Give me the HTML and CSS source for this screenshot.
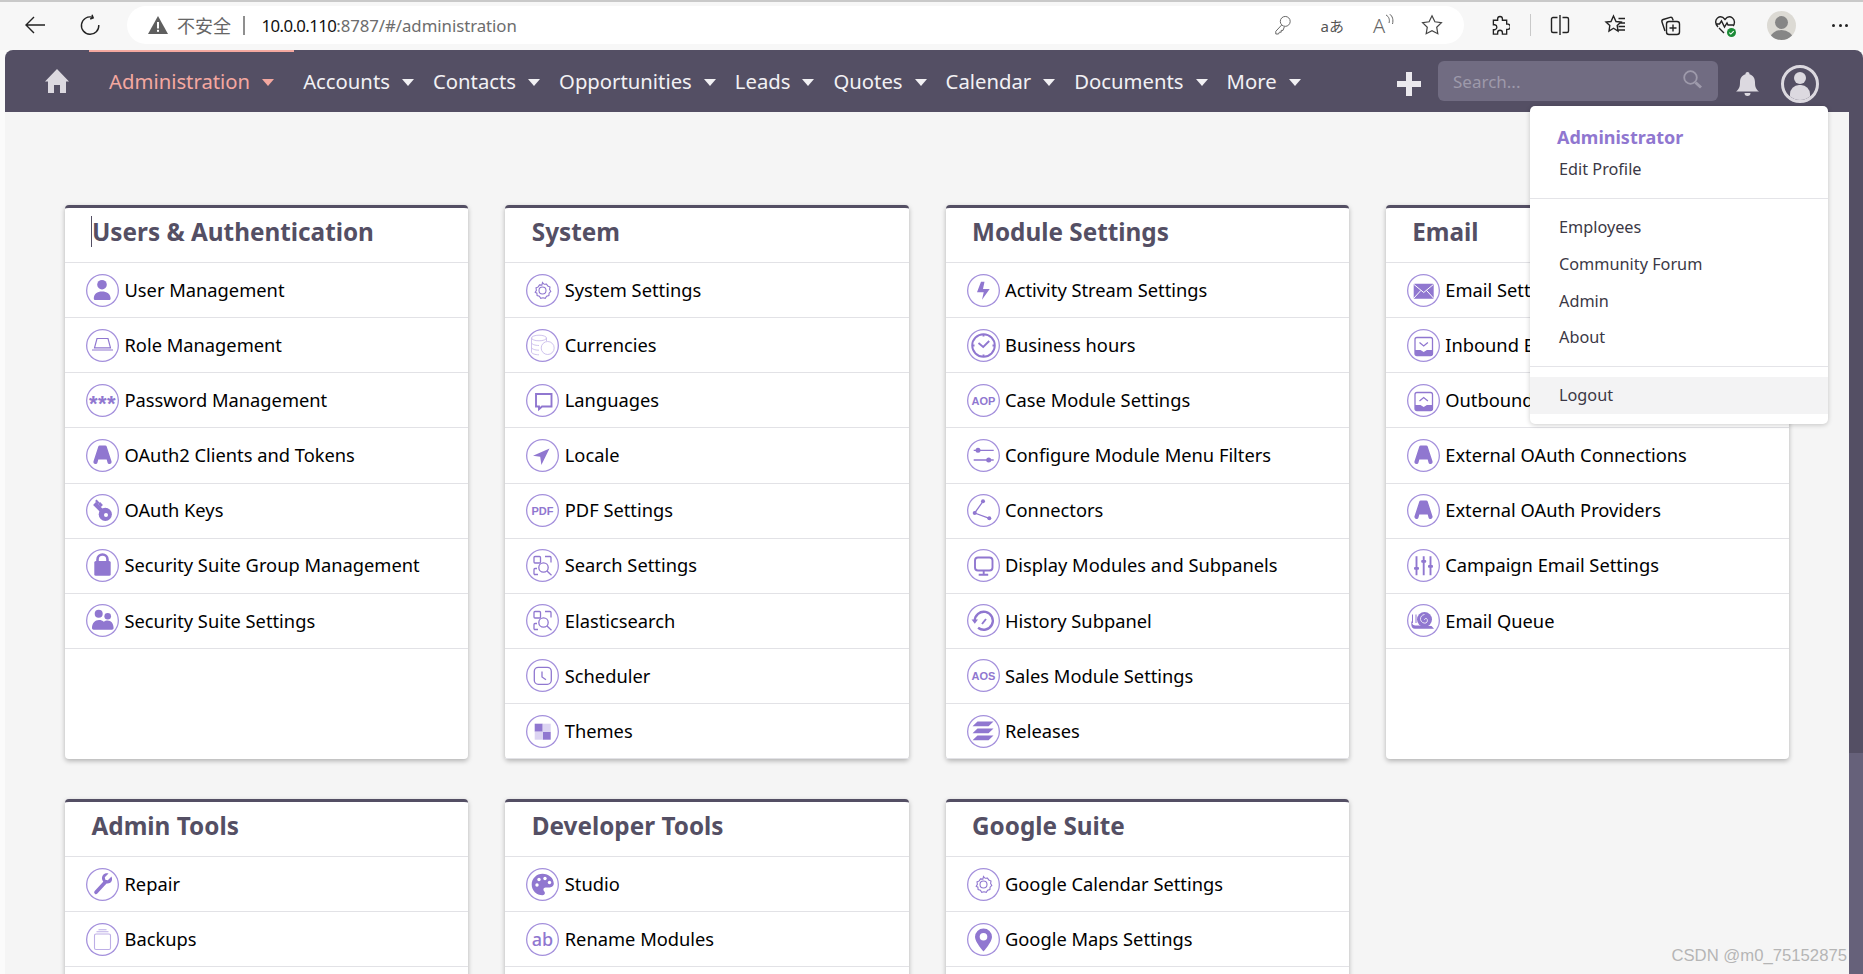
FILE: index.html
```html
<!DOCTYPE html>
<html lang="en">
<head>
<meta charset="utf-8">
<title>Administration</title>
<link rel="stylesheet" href="styles.css">
</head>
<body>
<svg class="defs" aria-hidden="true">
  <defs>
    <symbol id="i-user" viewBox="0 0 33 33"><circle cx="16" cy="10.7" r="4.8"/><path d="M7.8 24.5c0-4.4 3.4-7 8.2-7s8.6 2.6 8.6 7c0 1-.7 1.6-1.6 1.6H9.4c-.9 0-1.6-.6-1.6-1.6z"/></symbol>
    <symbol id="i-hat" viewBox="0 0 33 33"><path class="ln" d="M6 21h21M8.500 18.800 11 9.500h11l2.500 9.300z"/></symbol>
    <symbol id="i-a" viewBox="0 0 33 33"><path d="M13.700 6.500h5.600c.7 0 1.200.4 1.400 1l4.800 14.700c.4 1.400-.5 2.800-1.900 2.800-1 0-1.800-.6-2.100-1.600l-.8-2.800h-8.400l-.8 2.800c-.3 1-1.100 1.600-2.100 1.600-1.400 0-2.300-1.400-1.900-2.800L12.300 7.500c.2-.6.700-1 1.400-1z"/></symbol>
    <symbol id="i-key" viewBox="0 0 33 33"><path class="ln k" d="M8.500 9.500 17 18M10.500 8.500l1.500-1.500M13.500 11.500l2-2"/><circle cx="19.300" cy="20.300" r="6.600"/><circle class="hole" cx="20" cy="21" r="2"/></symbol>
    <symbol id="i-lock" viewBox="0 0 33 33"><path class="ln t" d="M11.500 13v-2.500a5 5 0 0 1 10 0V13"/><rect x="8.300" y="12" width="16.400" height="14.800" rx="1.600"/></symbol>
    <symbol id="i-group" viewBox="0 0 33 33"><circle cx="12.700" cy="9.700" r="4"/><circle cx="21.700" cy="12.300" r="3.300"/><path d="M6 24c0-5 3-8 7-8 2 0 3.600.6 4.800 1.700 1-.8 2.300-1.300 3.800-1.300 3.600 0 6 3 6 7.600 0 1-.7 1.700-1.700 1.700H7.700C6.700 25.700 6 25 6 24z"/></symbol>
    <symbol id="i-gear" viewBox="0 0 33 33"><path class="ln thin" d="M16.500 8.500l1.600 1.800 2.400-.2 1.300 2 2.200 1-.4 2.400 1.200 2-1.700 1.700-.2 2.400-2.300.7-1.300 2-2.300-.6-2.300.6-1.300-2-2.300-.7-.2-2.400L9.200 18.300l1.200-2-.4-2.400 2.200-1 1.300-2 2.400.2z"/><circle class="ln thin" cx="16.500" cy="16.500" r="3.500"/></symbol>
    <symbol id="i-coins" viewBox="0 0 33 33"><g class="ln faint"><ellipse cx="13" cy="9" rx="7.500" ry="2.800"/><path d="M5.500 9v14c0 1.500 3.400 2.800 7.500 2.800M5.500 13.700c0 1.500 3.400 2.800 7.500 2.800M5.500 18.400c0 1.500 3.400 2.800 7.500 2.800M20.500 9v3"/><circle cx="21.700" cy="19" r="6.500"/></g></symbol>
    <symbol id="i-bubble" viewBox="0 0 33 33"><path class="ln m" d="M10 10h15.500v12.500H16l-3 2.700v-2.700h-3z"/></symbol>
    <symbol id="i-arrow" viewBox="0 0 33 33"><path d="M23.500 9.500 7 16.700l7.200 1.100L15.400 26z"/></symbol>
    <symbol id="i-scan" viewBox="0 0 33 33"><g class="ln s"><rect x="8" y="7.500" width="6.500" height="6.500" rx="1"/><path d="M19 7.500h5a1 1 0 0 1 1 1v5M8 25.500v-5a1 1 0 0 1 1-1h2M8 25.500h4"/><circle cx="17.500" cy="18.500" r="4.700"/><path d="M21 22l4.500 4.300"/></g></symbol>
    <symbol id="i-sched" viewBox="0 0 33 33"><rect class="ln s" x="8.300" y="8.300" width="17" height="17" rx="4"/><path class="ln s" d="M16 12.500V18l4 2.800"/></symbol>
    <symbol id="i-theme" viewBox="0 0 33 33"><rect x="8.700" y="8.700" width="8" height="8"/><rect x="16.700" y="16.700" width="8" height="8"/><rect class="pale" x="16.700" y="8.700" width="8" height="8"/><rect class="pale" x="8.700" y="16.700" width="8" height="8"/></symbol>
    <symbol id="i-bolt" viewBox="0 0 33 33"><path d="M14 7.700 10 18.300h6.700L15 25.700 22.700 15H16l1.500-7.300z"/></symbol>
    <symbol id="i-clock" viewBox="0 0 33 33"><circle class="ln m" cx="16.500" cy="16.500" r="11.300"/><path class="ln m" d="M11.500 14l4.700 4 6-6M16.500 5.500v2M16.500 25.500v2M5.500 16.500h2M25.500 16.500h2"/></symbol>
    <symbol id="i-filter" viewBox="0 0 33 33"><path class="ln s" d="M6.700 11.300h20M6.700 21h20"/><circle cx="11" cy="11.300" r="2.500"/><circle cx="21.700" cy="21" r="2.500"/></symbol>
    <symbol id="i-conn" viewBox="0 0 33 33"><path class="ln s" d="M16 7.300 7.700 19l14.600 5.300"/><circle cx="16" cy="7.300" r="2"/><circle cx="7.700" cy="19" r="2"/><circle cx="22.300" cy="24.300" r="2"/></symbol>
    <symbol id="i-monitor" viewBox="0 0 33 33"><rect class="ln m" x="8" y="8.500" width="17.500" height="13" rx="3"/><path class="ln m" d="M16.700 21.500v4M11.700 25.700h9.500"/></symbol>
    <symbol id="i-hist" viewBox="0 0 33 33"><path class="ln h" d="M7.800 17a9 9 0 1 1 3.300 6.700"/><path d="M4.500 15.500h6.500l-3.200 4.300z"/><path class="ln m" d="M15 20l4-5"/></symbol>
    <symbol id="i-stack" viewBox="0 0 33 33"><path d="M10.500 6.500h16l-5 4.700h-16zM10.500 13.500h16l-5 4.700h-16zM10.500 20.500h16l-5 4.700h-16z"/></symbol>
    <symbol id="i-mail" viewBox="0 0 33 33"><rect x="6.700" y="9.700" width="20" height="15" rx="1"/><path class="ln wh" d="M7 10.500l9.700 8 9.700-8M7 24l6.800-7.500M26.400 24l-6.800-7.500"/></symbol>
    <symbol id="i-inbox" viewBox="0 0 33 33"><rect class="ln s" x="8" y="8.500" width="17.500" height="18" rx="2"/><path d="M8 21h5.500l3.200 2 3.200-2h5.600v3.500a2 2 0 0 1-2 2H10a2 2 0 0 1-2-2z"/><path class="ln s" d="M12.500 13.500l4.200 3.500 4.200-3.500"/></symbol>
    <symbol id="i-outbox" viewBox="0 0 33 33"><rect class="ln s" x="8" y="8.500" width="17.500" height="18" rx="2"/><path d="M8 21h5.500l3.200 2 3.200-2h5.600v3.500a2 2 0 0 1-2 2H10a2 2 0 0 1-2-2z"/><path class="ln s" d="M12.500 17l4.200-3.500 4.200 3.500"/></symbol>
    <symbol id="i-sliders" viewBox="0 0 33 33"><path class="ln m" d="M9.500 7.300v19M16.700 7.300v19M23.500 7.300v19"/><rect x="7" y="18" width="5" height="2.800" rx="1"/><rect x="14.200" y="11" width="5" height="2.800" rx="1"/><rect x="21" y="16" width="5" height="2.800" rx="1"/></symbol>
    <symbol id="i-snail" viewBox="0 0 33 33"><circle cx="17.500" cy="15.500" r="7.500"/><path d="M5 18c0 2.500 1.500 3.500 3.500 3.500h7l9 .5 2.500 2.800H8C5.500 24.800 4.300 23 4.300 20v-3z"/><path class="ln k2" d="M5.500 10.500V19M9 10.500V19"/><path class="ln wh2" d="M17.500 16a1.500 1.500 0 0 1 2-1.500 2.800 2.800 0 0 1-.5 4.500 4.500 4.500 0 0 1-5.500-3.500 4.500 4.500 0 0 1 4-5"/></symbol>
    <symbol id="i-wrench" viewBox="0 0 33 33"><path class="ln w" d="M10 24.300 19 14.500"/><path d="M25.500 8.500l-3.700 3.700-2.500-.5-.5-2.500 3.700-3.700c-3-1-6.500 1-6.500 4.700 0 3.800 4.500 6.700 8.300 4.500 2-1.200 2.200-4 1.200-6.200z"/></symbol>
    <symbol id="i-box" viewBox="0 0 33 33"><g class="ln faint2"><rect x="8.500" y="11" width="16" height="15.500" rx="1.500"/><path d="M10.500 8.800h12M12.500 6.800h8"/></g></symbol>
    <symbol id="i-palette" viewBox="0 0 33 33"><path d="M16.500 5.700c-6 0-10.800 4.800-10.800 10.800 0 6 4.800 10.800 10.800 10.800 1.500 0 2.400-1 2.400-2.200 0-1.800-1.500-2-1.500-3.500 0-1.200 1-2 2.200-2h3c2.800 0 5.200-1.400 5.200-4 0-5.500-5-9.900-11.300-9.900z"/><circle class="hole" cx="11" cy="17" r="1.700"/><circle class="hole" cx="13" cy="11.500" r="1.700"/><circle class="hole" cx="19" cy="10.500" r="1.700"/><circle class="hole" cx="23.500" cy="14.500" r="1.700"/></symbol>
    <symbol id="i-pin" viewBox="0 0 33 33"><path d="M16.500 5.500a8.500 8.500 0 0 1 8.500 8.500c0 5-8.500 14.500-8.500 14.500S8 19 8 14a8.500 8.500 0 0 1 8.500-8.500z"/><circle class="hole" cx="16.500" cy="13.800" r="3.800"/></symbol>
  </defs>
</svg>

<div class="window">
  <header class="chrome">
    <svg class="cb back" viewBox="0 0 22 22"><path d="M21 11H2M10 3l-8 8 8 8"/></svg>
    <svg class="cb reload" viewBox="0 0 22 22"><path d="M13.500 3.200A8.700 8.700 0 1 0 19.800 11M13 .8l1.200 3-3 1.200"/></svg>
    <div class="omnibox">
      <svg class="warn" viewBox="0 0 20 18"><path d="M10 0 20 18H0z"/><rect class="warn-mark" x="9" y="6" width="2" height="6.500"/><rect class="warn-mark" x="9" y="13.800" width="2" height="2"/></svg>
      <span class="insecure">不安全</span>
      <span class="omni-sep"></span>
      <span class="url"><b class="host">10.0.0.110</b>:8787/#/administration</span>
      <span class="omni-tools">
        <svg class="ob key" viewBox="0 0 20 22"><circle cx="12.500" cy="7" r="5.500"/><path d="M8.500 11 2 18v3h3l1-2h2v-2h2l1.500-4M14 5.500h.1"/></svg>
        <span class="ob-text translate">aあ</span>
        <span class="ob-read">A<svg class="waves" viewBox="0 0 9 12"><path d="M1 1c3 1.500 4 5 3 8M4.500 0c3.200 2 4 6 3 10"/></svg></span>
        <svg class="ob star" viewBox="0 0 22 22"><path d="M11 1.800l2.900 6 6.500.9-4.700 4.500 1.100 6.500-5.800-3.100-5.800 3.100 1.100-6.500L1.600 8.700l6.500-.9z"/></svg>
      </span>
    </div>
    <div class="chrome-tools">
      <svg class="cb puzzle" viewBox="0 0 20 22"><path d="M7 5.500V4a2.500 2.500 0 0 1 5 0v1.500h4.500v4H18a2.800 2.800 0 0 1 0 5.500h-1.500v5H12v-1.500a2.500 2.500 0 0 0-5 0V20H2.500v-4.500H4a2.700 2.700 0 0 0 0-5.300H2.500V5.500z"/></svg>
      <span class="tool-sep"></span>
      <svg class="cb split" viewBox="0 0 20 20"><path d="M7.500 2.500H3a1.500 1.500 0 0 0-1.500 1.500v12A1.500 1.500 0 0 0 3 17.500h4.500M12.500 2.500H17A1.500 1.500 0 0 1 18.500 4v12a1.500 1.500 0 0 1-1.500 1.500h-4.500M10 0v20"/></svg>
      <svg class="cb favs" viewBox="0 0 22 22"><path d="M9.500 2 12 7.500l5 .5-3.800 3.500L14 17l-4.500-2.800L5 17l.8-5.500L2 8l5-.5zM14.500 4.500H21M16.500 9H21M14.500 12.500H21M14.500 16H21"/></svg>
      <svg class="cb colls" viewBox="0 0 22 22"><path d="M6 17 3 8c-.4-1.200.3-2.200 1.200-2.500l7-2.200c1-.3 2 .2 2.300 1.200l.7 2"/><rect x="7.500" y="7.500" width="13" height="13" rx="2.500"/><path d="M14 10.500v7M10.500 14h7"/></svg>
      <span class="health">
        <svg class="cb heart" viewBox="0 0 22 20"><path d="M4 12C1 9 1 5 3.500 3c2.500-1.800 5.500-1 7.500 1.500C13 2 16 1.200 18.500 3c2.500 2 2.500 6 .5 8M1.500 9h4l2-3 3 6 2.500-4 1 2h5M5 13l5 5"/></svg>
        <svg class="ok" viewBox="0 0 9 9"><circle cx="4.500" cy="4.500" r="4.500"/><path d="M2.300 4.700l1.500 1.400 2.900-3"/></svg>
      </span>
      <span class="profile"><span class="p-head"></span><span class="p-body"></span></span>
      <span class="dots"><i></i><i></i><i></i></span>
    </div>
  </header>

  <nav class="navbar">
    <svg class="home" viewBox="0 0 24 24"><path d="M12 0 24 12.500h-3V24h-6v-8H9v8H3V12.500H0z"/></svg>
    <ul class="menu">
      <li class="menu-item active"><span>Administration</span><i class="drop"></i></li>
      <li class="menu-item"><span>Accounts</span><i class="drop"></i></li>
      <li class="menu-item"><span>Contacts</span><i class="drop"></i></li>
      <li class="menu-item"><span>Opportunities</span><i class="drop"></i></li>
      <li class="menu-item"><span>Leads</span><i class="drop"></i></li>
      <li class="menu-item"><span>Quotes</span><i class="drop"></i></li>
      <li class="menu-item"><span>Calendar</span><i class="drop"></i></li>
      <li class="menu-item"><span>Documents</span><i class="drop"></i></li>
      <li class="menu-item"><span>More</span><i class="drop"></i></li>
    </ul>
    <div class="nav-right">
      <svg class="plus" viewBox="0 0 24 24"><path d="M9 0h6v9h9v6h-9v9H9v-9H0V9h9z"/></svg>
      <div class="search">
        <span class="search-ph">Search...</span>
        <svg class="search-ic" viewBox="0 0 20 19"><circle cx="7.500" cy="7.500" r="6.300"/><path class="handle" d="M12.500 12.500l5.500 5"/></svg>
      </div>
      <svg class="bell" viewBox="0 0 23 25"><path d="M11.500 0a2 2 0 0 1 2 2.200c3.800 1 5.500 4.200 5.500 8 0 4.800 1 6.800 4 9.300H0c3-2.500 4-4.500 4-9.300 0-3.800 1.700-7 5.500-8a2 2 0 0 1 2-2.200zM8.500 21h6a3 3 0 0 1-6 0z"/></svg>
      <span class="avatar"><span class="a-head"></span><span class="a-body"></span></span>
    </div>
  </nav>

  <div class="stage">
    <main class="content">
      <section class="card">
        <h2 class="card-title"><i class="caret"></i>Users &amp; Authentication</h2>
        <ul class="rows">
          <li class="row"><svg class="ic"><use href="#i-user"/></svg><span>User Management</span></li>
          <li class="row"><svg class="ic"><use href="#i-hat"/></svg><span>Role Management</span></li>
          <li class="row"><svg class="ic" viewBox="0 0 33 33"><text class="ic-stars" x="16.500" y="27">***</text></svg><span>Password Management</span></li>
          <li class="row"><svg class="ic"><use href="#i-a"/></svg><span>OAuth2 Clients and Tokens</span></li>
          <li class="row"><svg class="ic"><use href="#i-key"/></svg><span>OAuth Keys</span></li>
          <li class="row"><svg class="ic"><use href="#i-lock"/></svg><span>Security Suite Group Management</span></li>
          <li class="row"><svg class="ic"><use href="#i-group"/></svg><span>Security Suite Settings</span></li>
        </ul>
      </section>
      <section class="card">
        <h2 class="card-title">System</h2>
        <ul class="rows">
          <li class="row"><svg class="ic"><use href="#i-gear"/></svg><span>System Settings</span></li>
          <li class="row"><svg class="ic"><use href="#i-coins"/></svg><span>Currencies</span></li>
          <li class="row"><svg class="ic"><use href="#i-bubble"/></svg><span>Languages</span></li>
          <li class="row"><svg class="ic"><use href="#i-arrow"/></svg><span>Locale</span></li>
          <li class="row"><svg class="ic" viewBox="0 0 33 33"><text class="ic-label" x="16.500" y="20.500">PDF</text></svg><span>PDF Settings</span></li>
          <li class="row"><svg class="ic"><use href="#i-scan"/></svg><span>Search Settings</span></li>
          <li class="row"><svg class="ic"><use href="#i-scan"/></svg><span>Elasticsearch</span></li>
          <li class="row"><svg class="ic"><use href="#i-sched"/></svg><span>Scheduler</span></li>
          <li class="row"><svg class="ic"><use href="#i-theme"/></svg><span>Themes</span></li>
        </ul>
      </section>
      <section class="card">
        <h2 class="card-title">Module Settings</h2>
        <ul class="rows">
          <li class="row"><svg class="ic"><use href="#i-bolt"/></svg><span>Activity Stream Settings</span></li>
          <li class="row"><svg class="ic"><use href="#i-clock"/></svg><span>Business hours</span></li>
          <li class="row"><svg class="ic" viewBox="0 0 33 33"><text class="ic-label" x="16.500" y="20.500">AOP</text></svg><span>Case Module Settings</span></li>
          <li class="row"><svg class="ic"><use href="#i-filter"/></svg><span>Configure Module Menu Filters</span></li>
          <li class="row"><svg class="ic"><use href="#i-conn"/></svg><span>Connectors</span></li>
          <li class="row"><svg class="ic"><use href="#i-monitor"/></svg><span>Display Modules and Subpanels</span></li>
          <li class="row"><svg class="ic"><use href="#i-hist"/></svg><span>History Subpanel</span></li>
          <li class="row"><svg class="ic" viewBox="0 0 33 33"><text class="ic-label" x="16.500" y="20.500">AOS</text></svg><span>Sales Module Settings</span></li>
          <li class="row"><svg class="ic"><use href="#i-stack"/></svg><span>Releases</span></li>
        </ul>
      </section>
      <section class="card">
        <h2 class="card-title">Email</h2>
        <ul class="rows">
          <li class="row"><svg class="ic"><use href="#i-mail"/></svg><span>Email Settings</span></li>
          <li class="row"><svg class="ic"><use href="#i-inbox"/></svg><span>Inbound Email</span></li>
          <li class="row"><svg class="ic"><use href="#i-outbox"/></svg><span>Outbound Email</span></li>
          <li class="row"><svg class="ic"><use href="#i-a"/></svg><span>External OAuth Connections</span></li>
          <li class="row"><svg class="ic"><use href="#i-a"/></svg><span>External OAuth Providers</span></li>
          <li class="row"><svg class="ic"><use href="#i-sliders"/></svg><span>Campaign Email Settings</span></li>
          <li class="row"><svg class="ic"><use href="#i-snail"/></svg><span>Email Queue</span></li>
        </ul>
      </section>
      <section class="card">
        <h2 class="card-title">Admin Tools</h2>
        <ul class="rows">
          <li class="row"><svg class="ic"><use href="#i-wrench"/></svg><span>Repair</span></li>
          <li class="row"><svg class="ic"><use href="#i-box"/></svg><span>Backups</span></li>
        </ul>
      </section>
      <section class="card">
        <h2 class="card-title">Developer Tools</h2>
        <ul class="rows">
          <li class="row"><svg class="ic"><use href="#i-palette"/></svg><span>Studio</span></li>
          <li class="row"><svg class="ic" viewBox="0 0 33 33"><text class="ic-ab" x="16.500" y="22.500">ab</text></svg><span>Rename Modules</span></li>
        </ul>
      </section>
      <section class="card">
        <h2 class="card-title">Google Suite</h2>
        <ul class="rows">
          <li class="row"><svg class="ic"><use href="#i-gear"/></svg><span>Google Calendar Settings</span></li>
          <li class="row"><svg class="ic"><use href="#i-pin"/></svg><span>Google Maps Settings</span></li>
        </ul>
      </section>
    </main>
    <div class="scrollbar"><div class="thumb"></div></div>
  </div>

  <div class="user-menu">
    <div class="um-group um-first">
      <div class="um-name">Administrator</div>
      <div class="um-item">Edit Profile</div>
    </div>
    <div class="um-group um-mid">
      <div class="um-item">Employees</div>
      <div class="um-item">Community Forum</div>
      <div class="um-item">Admin</div>
      <div class="um-item">About</div>
    </div>
    <div class="um-group um-last">
      <div class="um-item um-hover">Logout</div>
    </div>
  </div>

  <div class="watermark">CSDN @m0_75152875</div>
</div>
</body>
</html>
```

FILE: styles.css
```css
* { box-sizing: border-box; }
html, body { margin: 0; padding: 0; height: 100%; }
body {
  overflow: hidden;
  background: #fbfbfb;
  color: #000;
  font-family: "Noto Sans", "Noto Sans CJK SC", sans-serif;
}
ul { list-style: none; margin: 0; padding: 0; }
.defs { position: absolute; width: 0; height: 0; }

.window { position: relative; width: 1863px; height: 974px; overflow: hidden; display: flex; flex-direction: column; }

/* browser chrome */
.chrome {
  flex: 0 0 50px;
  display: flex;
  align-items: center;
  background: #f7f7f7;
  border-top: 2px solid #c9c9c9;
  padding: 0 15px 2px 24px;
}
.cb { fill: none; stroke: #222; stroke-width: 1.400; flex: none; }
.back { width: 22px; height: 22px; }
.reload { width: 22px; height: 22px; margin-left: 33px; }
.omnibox {
  width: 1338px;
  height: 38px;
  margin-left: 26px;
  background: #fff;
  border-radius: 19px;
  display: flex;
  align-items: center;
  padding-left: 21px;
  color: #6a6a6a;
  font-size: 16.800px;
}
.warn { width: 20px; height: 18px; fill: #5f5f5f; flex: none; }
.warn-mark { fill: #fff; }
.insecure { margin-left: 9px; font-size: 18px; color: #666; }
.omni-sep { width: 1.500px; height: 19px; background: #8f8f8f; margin: 0 17px 0 12px; }
.url { color: #6d6d6d; letter-spacing: -.05px; }
.host { font-weight: 400; color: #111; letter-spacing: -.6px; }
.omni-tools { margin-left: auto; display: flex; align-items: center; padding-right: 21px; }
.ob { fill: none; stroke: #666; stroke-width: 1.100; flex: none; }
.key { width: 18px; height: 20px; }
.ob-text { font-size: 15px; color: #555; margin-left: 29px; }
.ob-read { position: relative; font-size: 20px; color: #666; margin-left: 29px; width: 20px; font-weight: 300; }
.waves { position: absolute; left: 12px; top: 2px; width: 9px; height: 12px; fill: none; stroke: #666; stroke-width: 1; }
.star { width: 22px; height: 22px; margin-left: 28px; stroke-width: 1.200; stroke: #444; }

.chrome-tools { display: flex; align-items: center; margin-left: 27px; }
.puzzle { width: 19px; height: 21px; }
.tool-sep { width: 1px; height: 22px; background: #c9c9c9; margin: 0 19px 0 20px; }
.split { width: 20px; height: 20px; }
.favs { width: 22px; height: 22px; margin-left: 34px; }
.colls { width: 22px; height: 22px; margin-left: 33px; }
.health { position: relative; display: block; width: 22px; height: 20px; margin-left: 33px; }
.heart { width: 22px; height: 20px; display: block; }
.ok { position: absolute; right: 0; bottom: -2px; width: 9px; height: 9px; fill: #1b8a36; stroke: #fff; stroke-width: 0; }
.ok path { fill: none; stroke: #fff; stroke-width: 1.100; }
.profile {
  position: relative;
  display: block;
  width: 29px; height: 29px;
  margin-left: 31px;
  border-radius: 50%;
  background: #dcdad4;
  overflow: hidden;
}
.p-head { position: absolute; left: 8px; top: 5px; width: 13px; height: 13px; border-radius: 50%; background: #868686; }
.p-body { position: absolute; left: 3px; top: 19px; width: 23px; height: 18px; border-radius: 50%; background: #868686; }
.dots { display: flex; gap: 3.500px; margin-left: 36px; }
.dots i { width: 3px; height: 3px; border-radius: 50%; background: #222; }

/* navbar */
.navbar {
  flex: 0 0 62px;
  margin-left: 5px;
  position: relative;
  display: flex;
  align-items: center;
  background: #544f64;
  border-radius: 8px 8px 0 0;
  padding-left: 40px;
  color: #fff;
}
.home { width: 24px; height: 24px; fill: #dcd9e0; flex: none; }
.menu { display: flex; align-items: stretch; margin-left: 20px; height: 62px; }
.menu-item {
  display: flex;
  align-items: center;
  padding: 0 19px 2px 20px;
  font-size: 20.300px;
  color: #f2f1f4;
  border-top: 2px solid transparent;
}
.menu-item + .menu-item { padding-left: 0; }
.menu-item.active { color: #f4a8a0; border-top-color: #f4a8a0; padding-right: 20px; margin-right: 9px; }
.drop { flex: none; width: 12px; height: 7px; margin: 3px 0 0 12px; border: 6px solid transparent; border-top: 7px solid currentColor; border-bottom: 0; }
.nav-right { position: absolute; left: 0; top: 0; width: 100%; height: 62px; pointer-events: none; }
.plus { position: absolute; left: 1392px; top: 22px; width: 24px; height: 24px; fill: #ebe9ee; }
.search {
  position: absolute;
  left: 1433px;
  top: 11px;
  width: 280px;
  height: 40px;
  border-radius: 6px;
  background: #716c82;
  display: flex;
  align-items: center;
  padding-left: 15px;
}
.search-ph { font-size: 17px; color: #9e9aab; }
.search-ic { position: absolute; right: 15px; top: 9px; width: 20px; height: 19px; fill: none; stroke: #9e9aab; stroke-width: 1.800; }
.handle { stroke-width: 3; }
.bell { position: absolute; left: 1731px; top: 22px; width: 23px; height: 25px; fill: #dcd9e0; }
.avatar {
  position: absolute;
  left: 1776px;
  top: 15px;
  width: 38px;
  height: 38px;
  border-radius: 50%;
  border: 3px solid #dcd9e0;
  overflow: hidden;
}
.a-head { position: absolute; left: 10px; top: 4px; width: 12px; height: 12px; border-radius: 50%; background: #dcd9e0; }
.a-body { position: absolute; left: 6px; top: 17px; width: 20px; height: 22px; border-radius: 9px 9px 0 0; background: #dcd9e0; }

/* page */
.stage { flex: 1; display: flex; min-height: 0; }
.content {
  flex: 1;
  margin-left: 5px;
  background: #f5f5f5;
  padding: 93px 60px 0;
  display: grid;
  grid-template-columns: repeat(4, 1fr);
  grid-auto-rows: 554px;
  gap: 40px 37px;
  overflow: hidden;
}
.scrollbar { flex: 0 0 14px; background: #66617a; }
.thumb { height: 641px; background: #544f64; }

.card {
  background: #fff;
  border-top: 3px solid #544f64;
  border-radius: 4px;
  box-shadow: 0 2px 5px rgba(0,0,0,.28);
}
.card-title {
  margin: 0;
  height: 55px;
  padding: 0 0 6.500px 26.500px;
  display: flex;
  align-items: center;
  border-bottom: 1px solid #e2e2e6;
  font-size: 24.300px;
  font-weight: 700;
  color: #544f64;
}
.caret { width: 1px; height: 31px; margin-left: -.5px; background: #544f64; }
.row {
  height: 55.140px;
  display: flex;
  align-items: center;
  padding-left: 21px;
  border-bottom: 1px solid #e2e2e6;
  font-size: 18.300px;
  color: #000;
}
.row span { margin: 0 0 1.600px 5.500px; }
.ic {
  width: 33px;
  height: 33px;
  flex: none;
  border-radius: 50%;
  box-shadow: inset 0 0 0 1.300px #a490dc;
  fill: #9077d0;
}
.ln { fill: none; stroke: #9077d0; stroke-width: 1.200; }
.ln.thin { stroke-width: 1.100; }
.ln.s { stroke-width: 1.300; }
.ln.m { stroke-width: 1.900; }
.ln.k { stroke-width: 4; }
.ln.t { stroke-width: 2.600; }
.ln.h { stroke-width: 2.400; }
.ln.w { stroke-width: 3.600; stroke-linecap: round; }
.ln.faint { stroke: #c9bceb; stroke-width: .9; }
.ln.faint2 { stroke: #bdaee6; stroke-width: 1.100; }
.ln.wh { stroke: #fff; stroke-width: 1; }
.ln.wh2 { stroke: #fff; stroke-width: .8; }
.ln.k2 { stroke-width: 1; }
.hole { fill: #fff; }
.pale { fill: #dcd4f2; }
.ic-stars { font-family: "Liberation Sans", sans-serif; font-size: 22px; font-weight: 700; fill: #9077d0; text-anchor: middle; letter-spacing: .4px; }
.ic-label { font-family: "Liberation Sans", sans-serif; font-size: 11px; font-weight: 700; fill: #9077d0; text-anchor: middle; }
.ic-ab { font-family: "Noto Sans", sans-serif; font-size: 18px; font-weight: 500; fill: #9077d0; text-anchor: middle; }

/* user dropdown */
.user-menu {
  position: absolute;
  left: 1530px;
  top: 106px;
  width: 298px;
  height: 318px;
  background: #fff;
  border-radius: 5px;
  box-shadow: 0 1px 5px rgba(0,0,0,.2);
}
.um-group { border-bottom: 1px solid #e4e4e8; }
.um-group:last-child { border-bottom: 0; }
.um-first { height: 93px; padding-top: 18px; }
.um-mid { height: 168px; padding-top: 10px; }
.um-last { padding-top: 10px; }
.um-name { padding-left: 27px; height: 26px; line-height: 26px; font-size: 18px; font-weight: 700; color: #9077d0; }
.um-item { height: 36.800px; line-height: 36.800px; padding-left: 29px; font-size: 16.250px; color: #3b3845; }
.um-first .um-item { height: 26px; line-height: 26px; margin-top: 6px; }
.um-hover { background: #f3f3f4; }

.watermark {
  position: absolute;
  right: 16px;
  bottom: 8px;
  font-family: "Liberation Sans", sans-serif;
  font-size: 16.700px;
  color: #b5b5b5;
}
```
